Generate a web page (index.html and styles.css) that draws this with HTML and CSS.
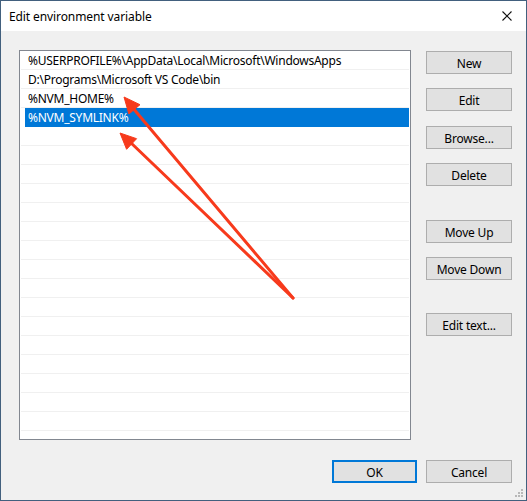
FILE: index.html
```html
<!DOCTYPE html>
<html>
<head>
<meta charset="utf-8">
<link rel="stylesheet" href="styles.css">
</head>
<body>
<div class="window">
  <div class="titlebar">
    <span class="title">Edit environment variable</span>
    <svg class="close" width="10" height="10" viewBox="0 0 10 10"><path d="M0.5 0.5 L9.5 9.5 M9.5 0.5 L0.5 9.5" stroke="#111" stroke-width="1.1" fill="none"/></svg>
  </div>
  <div class="content">
    <div class="main">
      <div class="list">
        <div class="row"><span class="txt">%USERPROFILE%\AppData\Local\Microsoft\WindowsApps</span></div>
        <div class="row"><span class="txt">D:\Programs\Microsoft VS Code\bin</span></div>
        <div class="row"><span class="txt">%NVM_HOME%</span></div>
        <div class="row sel"><span class="txt">%NVM_SYMLINK%</span></div>
        <div class="row"><span class="txt"></span></div>
        <div class="row"><span class="txt"></span></div>
        <div class="row"><span class="txt"></span></div>
        <div class="row"><span class="txt"></span></div>
        <div class="row"><span class="txt"></span></div>
        <div class="row"><span class="txt"></span></div>
        <div class="row"><span class="txt"></span></div>
        <div class="row"><span class="txt"></span></div>
        <div class="row"><span class="txt"></span></div>
        <div class="row"><span class="txt"></span></div>
        <div class="row"><span class="txt"></span></div>
        <div class="row"><span class="txt"></span></div>
        <div class="row"><span class="txt"></span></div>
        <div class="row"><span class="txt"></span></div>
        <div class="row"><span class="txt"></span></div>
        <div class="row"><span class="txt"></span></div>
      </div>
      <div class="side">
        <button class="btn">New</button>
        <button class="btn g14">Edit</button>
        <button class="btn g15">Browse...</button>
        <button class="btn g14">Delete</button>
        <button class="btn g34">Move Up</button>
        <button class="btn g14">Move Down</button>
        <button class="btn g32">Edit text...</button>
      </div>
    </div>
    <div class="footer">
      <button class="btn ok">OK</button>
      <button class="btn">Cancel</button>
    </div>
  </div>
  <svg class="grip" width="8" height="8" viewBox="0 0 8 8">
    <rect x="6" y="0" width="2" height="2" fill="#b8b8b8"/>
    <rect x="3" y="3" width="2" height="2" fill="#b8b8b8"/>
    <rect x="6" y="3" width="2" height="2" fill="#b8b8b8"/>
    <rect x="0" y="6" width="2" height="2" fill="#b8b8b8"/>
    <rect x="3" y="6" width="2" height="2" fill="#b8b8b8"/>
    <rect x="6" y="6" width="2" height="2" fill="#b8b8b8"/>
  </svg>
  <svg class="arrows" width="527" height="501" viewBox="0 0 527 501">
    <g stroke="#f73a1c" stroke-width="3" stroke-linecap="round" fill="#f73a1c">
      <line x1="293" y1="298" x2="132" y2="107"/>
      <line x1="293" y1="298" x2="129" y2="141"/>
    </g>
    <g fill="#f73a1c" stroke="#f73a1c" stroke-width="1" stroke-linejoin="round">
      <polygon points="124,97 140,104.7 128.9,114"/>
      <polygon points="120,133 136.6,138.7 126.6,149.3"/>
    </g>
  </svg>
</div>
</body>
</html>
```
FILE: styles.css
```css
html, body {
  margin: 0;
  padding: 0;
}
body {
  width: 527px;
  height: 501px;
  font-family: "Noto Sans", "Open Sans", sans-serif;
  font-size: 12px;
  color: #000;
}
.window {
  position: relative;
  box-sizing: border-box;
  width: 527px;
  height: 501px;
  border: 1px solid #42607e;
  background: #f0f0f0;
  display: flex;
  flex-direction: column;
}
.titlebar {
  height: 30px;
  background: #fff;
  display: flex;
  align-items: center;
  justify-content: space-between;
  padding: 0 14px 0 8px;
  flex: none;
}
.title {
  font-size: 12px;
  letter-spacing: -0.1px;
  margin-top: 1px;
}
.close {
  margin-top: 0;
}
.content {
  flex: 1;
  display: flex;
  flex-direction: column;
  padding: 19px 14px 0 18px;
}
.main {
  display: flex;
  gap: 15px;
}
.list {
  box-sizing: border-box;
  width: 392px;
  height: 390px;
  border: 1px solid #828790;
  background: #fff;
  padding: 0 1px;
}
.row {
  box-sizing: border-box;
  height: 19px;
  border-bottom: 1px solid #f0f0f0;
  display: flex;
}
.txt {
  flex: 1;
  margin-left: 4px;
  padding-left: 3px;
  padding-top: 1px;
  line-height: 18px;
  height: 19px;
  box-sizing: border-box;
  white-space: nowrap;
  letter-spacing: -0.25px;
}
.row.sel {
  border-bottom-color: transparent;
}
.row.sel .txt {
  background: #0078d7;
  color: #fff;
}
.side {
  display: flex;
  flex-direction: column;
  padding-top: 1px;
}
.btn {
  box-sizing: border-box;
  width: 86px;
  height: 23px;
  background: #e1e1e1;
  border: 1px solid #adadad;
  font-family: "Noto Sans", "Open Sans", sans-serif;
  font-size: 12px;
  color: #000;
  padding: 1px 0 0 0;
  margin: 0;
  letter-spacing: -0.2px;
}
.g14 { margin-top: 14px; }
.g15 { margin-top: 15px; }
.g32 { margin-top: 33px; }
.g34 { margin-top: 34px; }
.footer {
  display: flex;
  justify-content: flex-end;
  gap: 9px;
  margin-top: 20px;
}
.btn.ok {
  border: 2px solid #0078d7;
  width: 85px;
}
.grip {
  position: absolute;
  right: 3px;
  bottom: 3px;
}
.arrows {
  position: absolute;
  left: -1px;
  top: -1px;
  pointer-events: none;
}
```
